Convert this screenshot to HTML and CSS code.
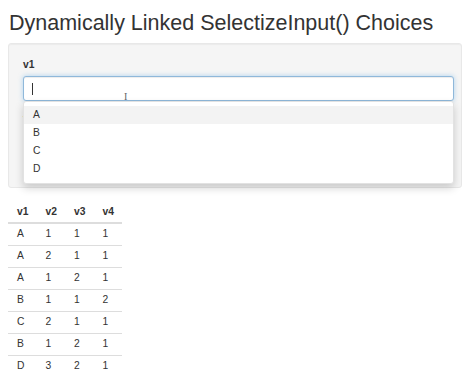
FILE: index.html
```html
<!DOCTYPE html>
<html>
<head>
<meta charset="utf-8">
<link rel="stylesheet" href="styles.css">
</head>
<body>
<div class="page">
  <h2 class="title">Dynamically Linked SelectizeInput() Choices</h2>
  <div class="well">
    <div class="form-group first">
      <label class="lbl">v1</label>
      <div class="select-wrap">
        <div class="input focus"><span class="caret"></span></div>
        <div class="dropdown">
          <div class="opt active">A</div>
          <div class="opt">B</div>
          <div class="opt">C</div>
          <div class="opt">D</div>
        </div>
        <span class="ibeam">I</span>
      </div>
    </div>
    <div class="form-group">
      <label class="lbl">v2</label>
      <div class="input"></div>
    </div>
  </div>
  <table class="tbl">
    <thead>
      <tr><th>v1</th><th>v2</th><th>v3</th><th>v4</th></tr>
    </thead>
    <tbody>
      <tr><td>A</td><td>1</td><td>1</td><td>1</td></tr>
      <tr><td>A</td><td>2</td><td>1</td><td>1</td></tr>
      <tr><td>A</td><td>1</td><td>2</td><td>1</td></tr>
      <tr><td>B</td><td>1</td><td>1</td><td>2</td></tr>
      <tr><td>C</td><td>2</td><td>1</td><td>1</td></tr>
      <tr><td>B</td><td>1</td><td>2</td><td>1</td></tr>
      <tr><td>D</td><td>3</td><td>2</td><td>1</td></tr>
    </tbody>
  </table>
</div>
</body>
</html>
```
FILE: styles.css
```css
html, body {
  margin: 0;
  padding: 0;
  background: #fff;
}
body {
  font-family: "Liberation Sans", Arial, Helvetica, sans-serif;
  font-size: 10.3px;
  line-height: 1.42857;
  color: #333;
}
.page {
  padding: 0 12px 0 8px;
}
.title {
  margin: 12px 0 7px 1px;
  font-size: 21.5px;
  font-weight: 400;
  line-height: 1.1;
  color: #333;
}
.well {
  background: #f5f5f5;
  border: 1px solid #e8e8e8;
  border-radius: 3px;
  padding: 14px 7px 20px 14px;
  box-shadow: inset 0 1px 1px rgba(0,0,0,.04);
  margin-bottom: 14px;
}
.form-group {
  margin-bottom: 11px;
}
.lbl {
  display: block;
  font-weight: 700;
  margin-bottom: 4px;
  height: 14.7px;
}
.select-wrap {
  position: relative;
}
.input {
  height: 23px;
  background: #fff;
  border: 1px solid #ccc;
  border-radius: 3px;
  padding: 0 8px;
  display: flex;
  align-items: center;
}
.input.focus {
  border-color: #8fb8da;
  box-shadow: inset 0 1px 1px rgba(0,0,0,.075), 0 0 5px rgba(102,175,233,.5);
}
.caret {
  display: block;
  width: 1px;
  height: 12px;
  background: #333;
}
.dropdown {
  position: absolute;
  left: 0;
  right: 0;
  top: 25px;
  background: #fff;
  border: 1px solid #e2e2e2;
  border-radius: 3px;
  padding: 4px 0 5px;
  box-shadow: 0 4px 8px rgba(0,0,0,.18);
  z-index: 5;
}
.opt {
  height: 18px;
  line-height: 18px;
  padding: 0 9px;
  color: #333;
}
.opt.active {
  background: #f3f3f3;
}
.ibeam {
  position: absolute;
  left: 101px;
  top: 16px;
  font-family: "Liberation Serif", serif;
  font-size: 10px;
  line-height: 10px;
  color: #666;
  z-index: 6;
}
.tbl {
  border-collapse: collapse;
  border-spacing: 0;
}
.tbl th, .tbl td {
  text-align: left;
  padding: 0 8px 0 9px;
  height: 21px;
  line-height: 14.7px;
  vertical-align: middle;
}
.tbl th {
  font-weight: 700;
  height: 20px;
  border-bottom: 2px solid #ddd;
}
.tbl td {
  border-top: 1px solid #ddd;
}
.tbl tbody tr:first-child td {
  border-top: 0;
}
```
